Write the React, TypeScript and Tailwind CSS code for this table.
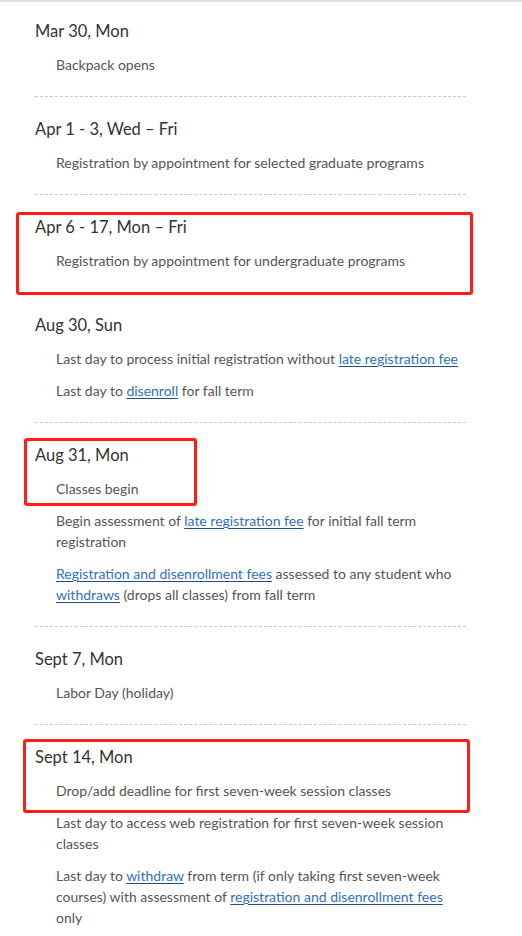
import React from "react";

type Part = string | { link: string };

type Entry = {
  date: string;
  items: Part[][];
};

const entries: Entry[] = [
  { date: "Mar 30, Mon", items: [["Backpack opens"]] },
  {
    date: "Apr 1 - 3, Wed – Fri",
    items: [["Registration by appointment for selected graduate programs"]],
  },
  {
    date: "Apr 6 - 17, Mon – Fri",
    items: [["Registration by appointment for undergraduate programs"]],
  },
  {
    date: "Aug 30, Sun",
    items: [
      [
        "Last day to process initial registration without ",
        { link: "late registration fee" },
      ],
      ["Last day to ", { link: "disenroll" }, " for fall term"],
    ],
  },
  {
    date: "Aug 31, Mon",
    items: [
      ["Classes begin"],
      [
        "Begin assessment of ",
        { link: "late registration fee" },
        " for initial fall term registration",
      ],
      [
        { link: "Registration and disenrollment fees" },
        " assessed to any student who ",
        { link: "withdraws" },
        " (drops all classes) from fall term",
      ],
    ],
  },
  { date: "Sept 7, Mon", items: [["Labor Day (holiday)"]] },
  {
    date: "Sept 14, Mon",
    items: [
      ["Drop/add deadline for first seven-week session classes"],
      ["Last day to access web registration for first seven-week session classes"],
      [
        "Last day to ",
        { link: "withdraw" },
        " from term (if only taking first seven-week courses) with assessment of ",
        { link: "registration and disenrollment fees" },
        " only",
      ],
    ],
  },
];

// red annotation boxes drawn over the screenshot
const highlights = [
  "left-[16px] top-[210px] w-[457px] h-[83px]",
  "left-[24px] top-[436px] w-[173px] h-[68px]",
  "left-[23px] top-[737px] w-[447px] h-[74px]",
];

function Paragraph({ parts }: { parts: Part[] }) {
  return (
    <p className="mt-[11px] text-[14px] leading-[21px] text-[#555]">
      {parts.map((part, i) =>
        typeof part === "string" ? (
          <span key={i}>{part}</span>
        ) : (
          <a
            key={i}
            href="#"
            className="text-[#3370b7] underline decoration-[#1d4e8f] underline-offset-2"
          >
            {part.link}
          </a>
        )
      )}
    </p>
  );
}

export default function App() {
  return (
    <div
      className="relative min-h-[936px] border-t-2 border-[#e2e2e6] bg-white"
      style={{ fontFamily: "Lato, 'Open Sans', sans-serif" }}
    >
      <div className="ml-[35px] w-[431px] pt-[17px]">
        {entries.map((entry, idx) => (
          <section
            key={entry.date}
            className={`pb-[21px] ${
              idx === 0 ? "" : "border-t border-dashed border-[#c8c8c8] pt-5"
            }`}
          >
            <h3 className="mb-[11px] text-[16.5px] leading-6 text-[#333]">
              {entry.date}
            </h3>
            <div className="pl-[21px]">
              {entry.items.map((parts, i) => (
                <Paragraph key={i} parts={parts} />
              ))}
            </div>
          </section>
        ))}
      </div>
      {highlights.map((cls) => (
        <div
          key={cls}
          className={`pointer-events-none absolute rounded-[3px] border-[3px] border-[#ff1d16] ${cls}`}
        />
      ))}
    </div>
  );
}
